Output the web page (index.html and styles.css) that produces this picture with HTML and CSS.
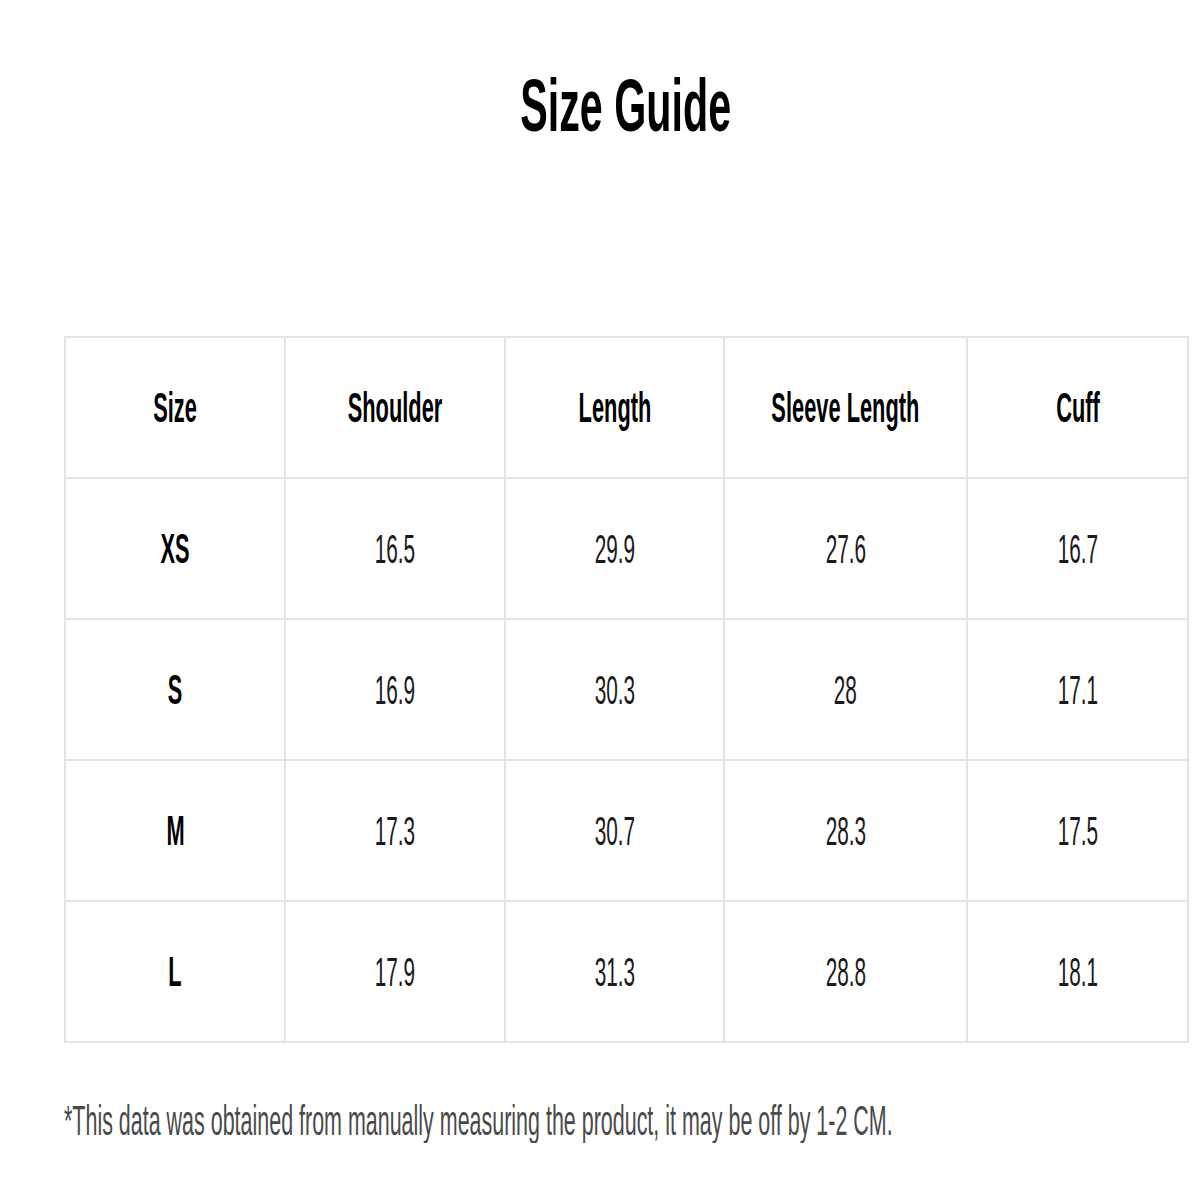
FILE: index.html
```html
<!DOCTYPE html>
<html>
<head>
<meta charset="utf-8">
<link rel="stylesheet" href="styles.css">
</head>
<body>
<div class="page">
  <h1 class="title"><span class="sq title-text">Size Guide</span></h1>
  <table class="sizes">
    <colgroup>
      <col class="c1"><col class="c2"><col class="c3"><col class="c4"><col class="c5">
    </colgroup>
    <thead>
      <tr>
        <th><span class="sq">Size</span></th>
        <th><span class="sq">Shoulder</span></th>
        <th><span class="sq">Length</span></th>
        <th><span class="sq">Sleeve Length</span></th>
        <th><span class="sq">Cuff</span></th>
      </tr>
    </thead>
    <tbody>
      <tr><th><span class="sq">XS</span></th><td><span class="sq">16.5</span></td><td><span class="sq">29.9</span></td><td><span class="sq">27.6</span></td><td><span class="sq">16.7</span></td></tr>
      <tr><th><span class="sq">S</span></th><td><span class="sq">16.9</span></td><td><span class="sq">30.3</span></td><td><span class="sq">28</span></td><td><span class="sq">17.1</span></td></tr>
      <tr><th><span class="sq">M</span></th><td><span class="sq">17.3</span></td><td><span class="sq">30.7</span></td><td><span class="sq">28.3</span></td><td><span class="sq">17.5</span></td></tr>
      <tr><th><span class="sq">L</span></th><td><span class="sq">17.9</span></td><td><span class="sq">31.3</span></td><td><span class="sq">28.8</span></td><td><span class="sq">18.1</span></td></tr>
    </tbody>
  </table>
  <p class="note"><span class="note-text">*This data was obtained from manually measuring the product, it may be off by 1-2 CM.</span></p>
</div>
</body>
</html>
```

FILE: styles.css
```css
html, body {
  margin: 0;
  padding: 0;
  background: #ffffff;
}

body {
  font-family: "Liberation Sans", Arial, sans-serif;
  color: #111;
}

.page {
  width: 1123px;
  margin-left: 64px;
}

.sq {
  display: inline-block;
  white-space: nowrap;
  margin: 0 -120px;
  transform: scaleX(0.52);
  transform-origin: center center;
}

.title {
  margin: 68px 0 0 0;
  text-align: center;
  font-size: 75px;
  line-height: 75px;
  font-weight: 700;
  color: #000;
}

.title-text {
  transform: scaleX(0.55);
}

.sizes {
  margin-top: 193px;
  width: 1123px;
  border-collapse: collapse;
  table-layout: fixed;
}

.c1 { width: 220px; }
.c2 { width: 220px; }
.c3 { width: 219px; }
.c4 { width: 243px; }
.c5 { width: 221px; }

.sizes th,
.sizes td {
  height: 139px;
  padding: 0;
  border: 2px solid #e4e4e4;
  text-align: center;
  vertical-align: middle;
  font-size: 42px;
  line-height: 44px;
}

.sizes th {
  font-weight: 700;
  color: #000;
}

.sizes td {
  font-weight: 400;
  color: #1a1a1a;
  font-size: 40px;
}

.note {
  margin: 56px 0 0 0;
  font-size: 42px;
  line-height: 44px;
  color: #4a4a4a;
  white-space: nowrap;
}

.note-text {
  display: inline-block;
  margin-right: -800px;
  transform: scaleX(0.511);
  transform-origin: left center;
}
```
